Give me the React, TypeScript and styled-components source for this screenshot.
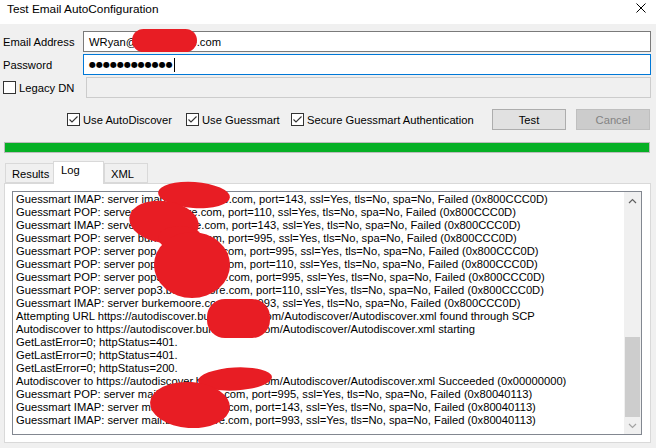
import React from "react";
import styled, { createGlobalStyle } from "styled-components";

const GlobalStyle = createGlobalStyle`
  html, body {
    margin: 0;
    padding: 0;
    background: #f0f0f0;
  }
  body {
    font-family: "Liberation Sans", Arial, sans-serif;
    font-size: 11.2px;
    color: #000;
  }
`;

const DOMAIN = "burkemoore.com";
const FAIL_CCC = "ssl=Yes, tls=No, spa=No, Failed (0x800CCC0D)";
const FAIL_113 = "ssl=Yes, tls=No, spa=No, Failed (0x80040113)";
const AD_URL = `https://autodiscover.${DOMAIN}/Autodiscover/Autodiscover.xml`;

const LOG_LINES = [
  `Guessmart IMAP: server imap.${DOMAIN}, port=143, ${FAIL_CCC}`,
  `Guessmart POP: server ${DOMAIN}, port=110, ${FAIL_CCC}`,
  `Guessmart IMAP: server ${DOMAIN}, port=143, ${FAIL_CCC}`,
  `Guessmart POP: server ${DOMAIN}, port=995, ${FAIL_CCC}`,
  `Guessmart POP: server pop.${DOMAIN}, port=995, ${FAIL_CCC}`,
  `Guessmart POP: server pop.${DOMAIN}, port=110, ${FAIL_CCC}`,
  `Guessmart POP: server pop3.${DOMAIN}, port=995, ${FAIL_CCC}`,
  `Guessmart POP: server pop3.${DOMAIN}, port=110, ${FAIL_CCC}`,
  `Guessmart IMAP: server ${DOMAIN}, port=993, ${FAIL_CCC}`,
  `Attempting URL ${AD_URL} found through SCP`,
  `Autodiscover to ${AD_URL} starting`,
  "GetLastError=0; httpStatus=401.",
  "GetLastError=0; httpStatus=401.",
  "GetLastError=0; httpStatus=200.",
  `Autodiscover to ${AD_URL} Succeeded (0x00000000)`,
  `Guessmart POP: server mail.${DOMAIN}, port=995, ${FAIL_113}`,
  `Guessmart IMAP: server mail.${DOMAIN}, port=143, ${FAIL_113}`,
  `Guessmart IMAP: server mail.${DOMAIN}, port=993, ${FAIL_113}`,
];

const Window = styled.div`
  position: relative;
  width: 656px;
  height: 448px;
  overflow: hidden;
  background: #f0f0f0;
`;

const TitleBar = styled.div`
  height: 24px;
  background: #fff;
  display: flex;
  align-items: flex-start;
  justify-content: space-between;
  padding: 1px 10px 0 7px;
  box-sizing: border-box;
`;

const Title = styled.span`
  font-size: 11.8px;
  line-height: 16px;
`;

const CloseGlyph = styled.svg`
  margin-top: 2px;
`;

const Body = styled.div`
  padding: 7px 5px 0 3px;
  display: flex;
  flex-direction: column;
`;

const FieldRow = styled.div`
  display: flex;
  align-items: center;
  height: 21px;
  margin-bottom: 2px;
`;

const FieldLabel = styled.label`
  width: 80px;
  flex: none;
`;

const TextInput = styled.div<{ $focused?: boolean; $disabled?: boolean }>`
  flex: 1;
  height: 21px;
  box-sizing: border-box;
  display: flex;
  align-items: center;
  padding-left: 5px;
  border: 1px solid
    ${({ $focused, $disabled }) =>
      $focused ? "#0078d7" : $disabled ? "#cccccc" : "#7a7a7a"};
  background: ${({ $disabled }) => ($disabled ? "#f0f0f0" : "#fff")};
  white-space: nowrap;
  overflow: hidden;
`;

const Dots = styled.span`
  font-family: "DejaVu Sans", sans-serif;
  font-size: 8px;
`;

const Caret = styled.span`
  display: inline-block;
  width: 1px;
  height: 14px;
  margin-left: 1px;
  background: #000;
`;

const CheckLabel = styled.label<{ $width?: number }>`
  display: flex;
  align-items: center;
  gap: 3px;
  flex: none;
  width: ${({ $width }) => ($width ? `${$width}px` : "auto")};
  white-space: nowrap;
`;

const Box = styled.span`
  width: 13px;
  height: 13px;
  box-sizing: border-box;
  border: 1px solid #333;
  background: #fff;
  display: flex;
  align-items: center;
  justify-content: center;
  flex: none;
`;

const OptionsRow = styled.div`
  display: flex;
  align-items: center;
  margin-top: 9px;
  padding-left: 64px;
  height: 21px;
`;

const Buttons = styled.div`
  margin-left: auto;
  margin-right: 1px;
  display: flex;
  gap: 10px;
`;

const Button = styled.button<{ $disabled?: boolean }>`
  width: 74px;
  height: 21px;
  box-sizing: border-box;
  font-family: inherit;
  font-size: 11.2px;
  padding: 0;
  border: 1px solid ${({ $disabled }) => ($disabled ? "#bfbfbf" : "#adadad")};
  background: ${({ $disabled }) => ($disabled ? "#cccccc" : "#e1e1e1")};
  color: ${({ $disabled }) => ($disabled ? "#838383" : "#000")};
`;

const Progress = styled.div`
  margin: 12px 1px 0 1px;
  height: 11px;
  box-sizing: border-box;
  border: 1px solid #bcbcbc;
  background: #e6e6e6;
`;

const ProgressFill = styled.div`
  height: 100%;
  background: #06b025;
`;

const TabStrip = styled.div`
  display: flex;
  align-items: flex-end;
  margin: 8px 0 0 2px;
  height: 22px;
  position: relative;
  z-index: 1;
`;

const Tab = styled.div<{ $active?: boolean; $width: number }>`
  width: ${({ $width }) => $width}px;
  box-sizing: border-box;
  height: ${({ $active }) => ($active ? 23 : 20)}px;
  margin-bottom: ${({ $active }) => ($active ? -1 : 0)}px;
  padding: ${({ $active }) => ($active ? "1px 0 0 7px" : "3px 0 0 6px")};
  border: 1px solid #d9d9d9;
  border-bottom: ${({ $active }) => ($active ? "none" : "1px solid #d9d9d9")};
  margin-left: ${({ $active }) => ($active ? -1 : 0)}px;
  background: ${({ $active }) => ($active ? "#fff" : "#f0f0f0")};
  line-height: 14px;
`;

const Panel = styled.div`
  margin: 0 0 0 1px;
  height: 260px;
  box-sizing: border-box;
  border: 1px solid #d9d9d9;
  background: #fff;
  padding: 7px 8px 7px 7px;
  display: flex;
`;

const LogBox = styled.div`
  flex: 1;
  display: flex;
  border: 1px solid #828790;
  background: #fff;
  overflow: hidden;
`;

const LogText = styled.div`
  flex: 1;
  padding: 1px 0 0 3px;
  line-height: 13px;
  white-space: pre;
  overflow: hidden;
`;

const Scrollbar = styled.div`
  width: 17px;
  flex: none;
  background: #f0f0f0;
  display: flex;
  flex-direction: column;
`;

const Arrow = styled.div`
  height: 17px;
  display: flex;
  align-items: center;
  justify-content: center;
  flex: none;
`;

const Track = styled.div`
  flex: 1;
  display: flex;
  flex-direction: column;
  justify-content: flex-end;
`;

const Thumb = styled.div`
  height: 80px;
  margin: 0 1px;
  background: #cdcdcd;
`;

const Redactions = styled.svg`
  position: absolute;
  left: 0;
  top: 0;
  pointer-events: none;
`;

const Check = () => (
  <svg width="11" height="11" viewBox="0 0 11 11">
    <path d="M1.5 5.5 L4 8 L9.5 2.5" fill="none" stroke="#333" strokeWidth="1.1" />
  </svg>
);

const Chevron = ({ up, color }: { up?: boolean; color: string }) => (
  <svg width="9" height="6" viewBox="0 0 9 6">
    <path
      d={up ? "M1 5 L4.5 1.5 L8 5" : "M1 1 L4.5 4.5 L8 1"}
      fill="none"
      stroke={color}
      strokeWidth="1.2"
    />
  </svg>
);

export default function App() {
  return (
    <>
      <GlobalStyle />
      <Window>
        <TitleBar>
          <Title>Test Email AutoConfiguration</Title>
          <CloseGlyph width="10" height="10" viewBox="0 0 10 10">
            <path d="M0.5 0.5 L9.5 9.5 M9.5 0.5 L0.5 9.5" stroke="#000" strokeWidth="1" />
          </CloseGlyph>
        </TitleBar>

        <Body>
          <FieldRow>
            <FieldLabel>Email Address</FieldLabel>
            <TextInput>WRyan@{DOMAIN}</TextInput>
          </FieldRow>
          <FieldRow>
            <FieldLabel>Password</FieldLabel>
            <TextInput $focused>
              <Dots>{"●".repeat(12)}</Dots>
              <Caret />
            </TextInput>
          </FieldRow>
          <FieldRow>
            <CheckLabel $width={83}>
              <Box />
              Legacy DN
            </CheckLabel>
            <TextInput $disabled />
          </FieldRow>

          <OptionsRow>
            <CheckLabel $width={119}>
              <Box><Check /></Box>
              Use AutoDiscover
            </CheckLabel>
            <CheckLabel $width={105}>
              <Box><Check /></Box>
              Use Guessmart
            </CheckLabel>
            <CheckLabel>
              <Box><Check /></Box>
              Secure Guessmart Authentication
            </CheckLabel>
            <Buttons>
              <Button>Test</Button>
              <Button $disabled>Cancel</Button>
            </Buttons>
          </OptionsRow>

          <Progress>
            <ProgressFill style={{ width: "100%" }} />
          </Progress>

          <TabStrip>
            <Tab $width={49}>Results</Tab>
            <Tab $width={51} $active>Log</Tab>
            <Tab $width={44}>XML</Tab>
          </TabStrip>
          <Panel>
            <LogBox>
              <LogText>
                {LOG_LINES.map((line, i) => (
                  <div key={i}>{line}</div>
                ))}
              </LogText>
              <Scrollbar>
                <Arrow><Chevron up color="#606060" /></Arrow>
                <Track><Thumb /></Track>
                <Arrow><Chevron color="#a3a3a3" /></Arrow>
              </Scrollbar>
            </LogBox>
          </Panel>
        </Body>

        {/* marker scribbles hiding parts of the address, drawn over the dialog */}
        <Redactions width="656" height="448" viewBox="0 0 656 448">
          <g fill="#e81d24">
            <rect x="132" y="29" width="65" height="23" rx="11.5" />

            <ellipse cx="194" cy="195" rx="36" ry="13" transform="rotate(4 194 195)" />
            <ellipse cx="164" cy="222" rx="35" ry="21" transform="rotate(8 164 222)" />
            <ellipse cx="180" cy="238" rx="22" ry="12" />
            <ellipse cx="192" cy="265" rx="38" ry="33" />

            <rect x="207" y="299" width="63" height="39" rx="18" />

            <ellipse cx="235" cy="379" rx="37" ry="11.5" transform="rotate(-3 235 379)" />
            <ellipse cx="190" cy="405" rx="40" ry="23" transform="rotate(4 190 405)" />
          </g>
        </Redactions>
      </Window>
    </>
  );
}
